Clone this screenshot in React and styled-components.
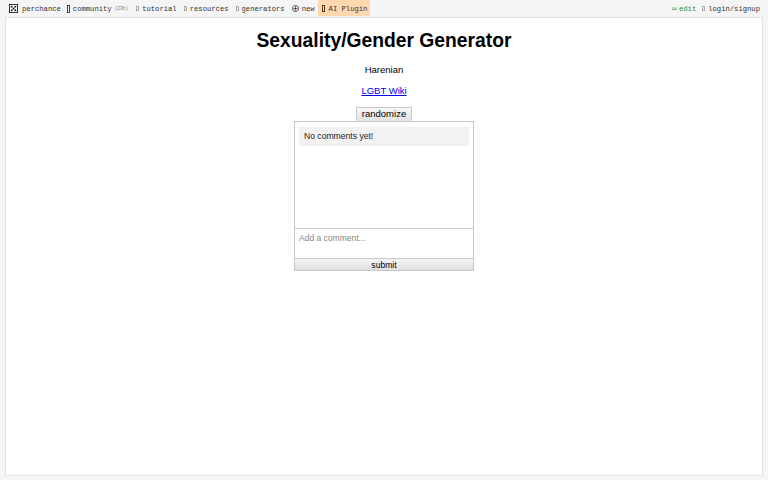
import styled, { createGlobalStyle } from "styled-components";

const GlobalStyle = createGlobalStyle`
  html, body {
    margin: 0;
    padding: 0;
    height: 100%;
    background: #f5f5f5;
    font-family: "Liberation Sans", Arial, sans-serif;
  }
  #root {
    height: 100%;
  }
`;

const Page = styled.div`
  display: flex;
  flex-direction: column;
  width: 768px;
  height: 480px;
  overflow: hidden;
`;

const TopBar = styled.nav`
  display: flex;
  align-items: stretch;
  justify-content: space-between;
  height: 16px;
  flex-shrink: 0;
  padding: 0 8px 0 9px;
  font-family: "Liberation Mono", monospace;
  font-size: 7.2px;
  color: #333;
`;

const NavGroup = styled.div`
  display: flex;
  align-items: center;
`;

const NavItem = styled.a`
  display: flex;
  align-items: center;
  box-sizing: border-box;
  height: 100%;
  margin-left: ${(p) => p.$gap || 0}px;
  padding: ${(p) => (p.$highlight ? "1px 3px 0 4px" : "1px 0 0")};
  background: ${(p) => (p.$highlight ? "#ffd8b0" : "transparent")};
  color: ${(p) => (p.$green ? "#2f8a2f" : "#333")};
  white-space: nowrap;
`;

const Tofu = styled.span`
  display: inline-block;
  box-sizing: border-box;
  width: ${(p) => p.$w || 3}px;
  height: ${(p) => p.$h || 5}px;
  margin-right: ${(p) => p.$mr || 3}px;
  border: 1px solid ${(p) => p.$color || "#aaa"};
`;

const Age = styled.span`
  margin-left: 3px;
  font-size: 4.5px;
  color: #777;
`;

const Logo = styled.svg`
  width: 9px;
  height: 9px;
  margin-right: 4px;
`;

const Globe = styled.svg`
  width: 7px;
  height: 7px;
  margin-right: 3px;
`;

const Pencil = styled.svg`
  width: 5px;
  height: 5px;
  margin-right: 2px;
`;

const Panel = styled.main`
  display: flex;
  flex-direction: column;
  align-items: center;
  box-sizing: border-box;
  width: 758px;
  height: 459px;
  margin-left: 5px;
  margin-top: 1px;
  background: #fff;
  border: 1px solid #e2e2e2;
`;

const Title = styled.h1`
  margin: 11px 0 0;
  font-size: 19.3px;
  line-height: 24px;
  font-weight: 700;
  color: #000;
`;

const Author = styled.p`
  margin: 11px 0 0;
  font-size: 9.5px;
  line-height: 12px;
  color: #000;
`;

const WikiLink = styled.a`
  margin-top: 9px;
  font-size: 9.5px;
  line-height: 12px;
  color: #0000ee;
  text-decoration: underline;
`;

const RandomButton = styled.button`
  box-sizing: border-box;
  height: 14px;
  margin-top: 10px;
  padding: 0 5px 2px;
  background: linear-gradient(#f6f6f6, #e4e4e4);
  border: 1px solid #c8c8c8;
  border-bottom: none;
  font-family: inherit;
  font-size: 9.5px;
  line-height: 12px;
  color: #000;
`;

const CommentBox = styled.section`
  display: flex;
  flex-direction: column;
  box-sizing: border-box;
  width: 180px;
  height: 150px;
  border: 1px solid #c8c8c8;
`;

const CommentList = styled.div`
  flex: 1;
  padding: 5px 4px;
`;

const EmptyNote = styled.div`
  padding: 0 5px;
  height: 19px;
  line-height: 19px;
  background: #f2f2f2;
  font-size: 8.6px;
  color: #222;
`;

const CommentInput = styled.div`
  box-sizing: border-box;
  height: 30px;
  padding: 4px;
  border-top: 1px solid #c8c8c8;
  font-size: 8.5px;
  line-height: 10px;
  color: #888;
`;

const SubmitButton = styled.button`
  box-sizing: border-box;
  height: 12px;
  padding: 1px 0 0;
  background: linear-gradient(#f4f4f4, #e0e0e0);
  border: none;
  border-top: 1px solid #c8c8c8;
  font-family: inherit;
  font-size: 8.6px;
  line-height: 11px;
  color: #000;
`;

export default function App() {
  return (
    <Page>
      <GlobalStyle />
      <TopBar>
        <NavGroup>
          <NavItem>
            <Logo viewBox="0 0 10 10">
              <rect x="0.5" y="0.5" width="9" height="9" fill="#fff" stroke="#222" />
              <rect x="2" y="2" width="2" height="2" fill="#222" />
              <rect x="6" y="2" width="2" height="2" fill="#222" />
              <rect x="4" y="4" width="2" height="2" fill="#222" />
              <rect x="2" y="6" width="2" height="2" fill="#222" />
              <rect x="6" y="6" width="2" height="2" fill="#222" />
            </Logo>
            perchance
          </NavItem>
          <NavItem $gap={6}>
            <Tofu $h={8} $color="#444" />
            community<Age>(23h)</Age>
          </NavItem>
          <NavItem $gap={8}>
            <Tofu />
            tutorial
          </NavItem>
          <NavItem $gap={7}>
            <Tofu />
            resources
          </NavItem>
          <NavItem $gap={7}>
            <Tofu />
            generators
          </NavItem>
          <NavItem $gap={7}>
            <Globe viewBox="0 0 7 7">
              <circle cx="3.5" cy="3.5" r="3" fill="none" stroke="#333" strokeWidth="0.8" />
              <path d="M3.5 1.5v4M1.5 3.5h4" stroke="#333" strokeWidth="0.8" />
            </Globe>
            new
          </NavItem>
          <NavItem $gap={3} $highlight>
            <Tofu $h={7} $mr={4} $color="#5a3a1a" />
            AI Plugin
          </NavItem>
        </NavGroup>
        <NavGroup>
          <NavItem $green>
            <Pencil viewBox="0 0 5 5">
              <path d="M0 2h5M0 3.5h5" stroke="#6aa86a" strokeWidth="0.8" />
            </Pencil>
            edit
          </NavItem>
          <NavItem $gap={6}>
            <Tofu />
            login/signup
          </NavItem>
        </NavGroup>
      </TopBar>
      <Panel>
        <Title>Sexuality/Gender Generator</Title>
        <Author>Harenian</Author>
        <WikiLink>LGBT Wiki</WikiLink>
        <RandomButton>randomize</RandomButton>
        <CommentBox>
          <CommentList>
            <EmptyNote>No comments yet!</EmptyNote>
          </CommentList>
          <CommentInput>Add a comment...</CommentInput>
          <SubmitButton>submit</SubmitButton>
        </CommentBox>
      </Panel>
    </Page>
  );
}
